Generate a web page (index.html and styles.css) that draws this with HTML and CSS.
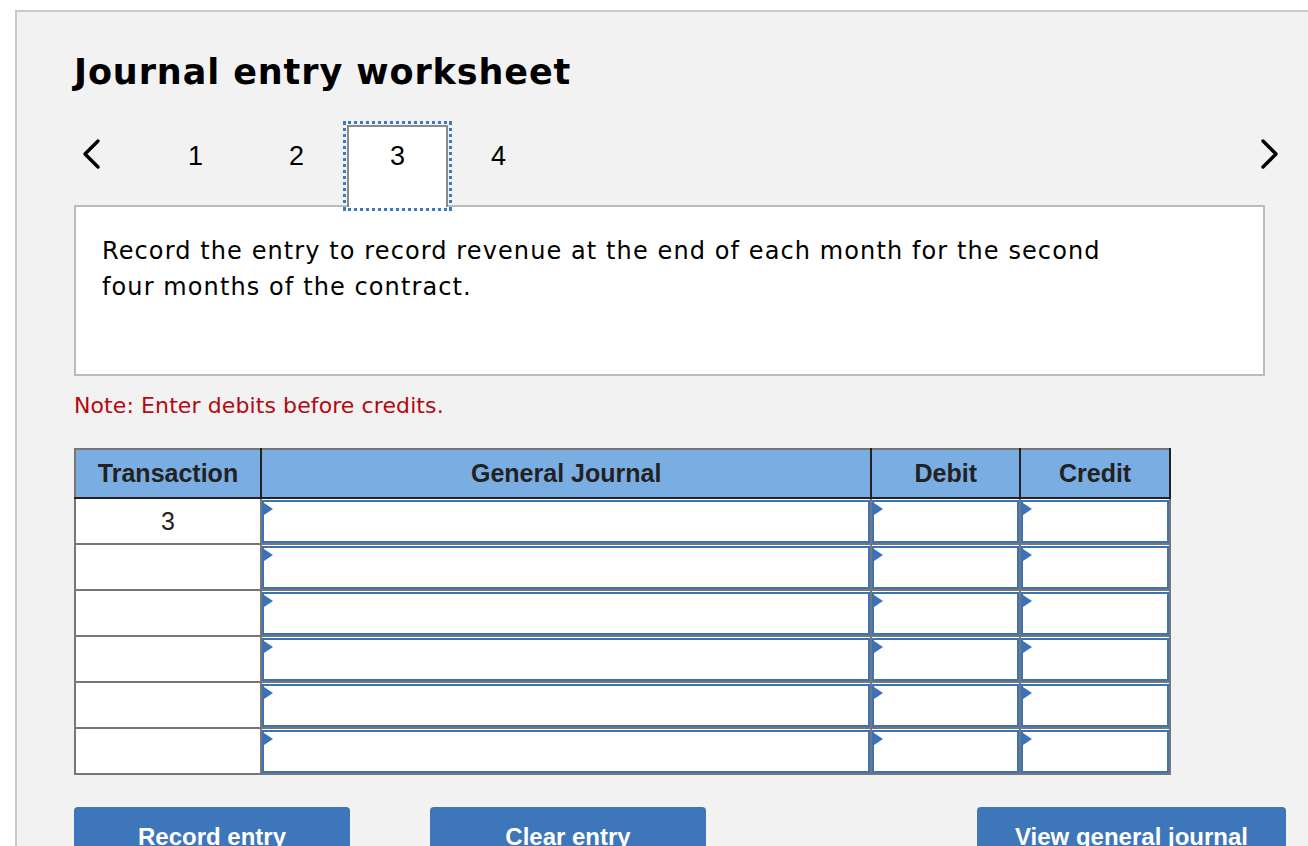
FILE: index.html
```html
<!DOCTYPE html>
<html lang="en">
<head>
<meta charset="utf-8">
<title>Journal entry worksheet</title>
<link rel="stylesheet" href="styles.css">
</head>
<body>
<div class="panel">
  <h1 class="title">Journal entry worksheet</h1>

  <div class="nav">
    <button class="chev chev-left" aria-label="Previous">
      <svg width="20" height="32" viewBox="0 0 20 32"><polyline points="17,3 4,16 17,29" fill="none" stroke="#000" stroke-width="3.4" stroke-linecap="round" stroke-linejoin="round"/></svg>
    </button>
    <div class="tabs">
      <span class="tab">1</span>
      <span class="tab">2</span>
      <span class="tab active">3</span>
      <span class="tab">4</span>
    </div>
    <button class="chev chev-right" aria-label="Next">
      <svg width="20" height="32" viewBox="0 0 20 32"><polyline points="3,3 16,16 3,29" fill="none" stroke="#000" stroke-width="3.4" stroke-linecap="round" stroke-linejoin="round"/></svg>
    </button>
  </div>

  <div class="question">
    <p>Record the entry to record revenue at the end of each month for the second four months of the contract.</p>
  </div>

  <p class="note">Note: Enter debits before credits.</p>

  <table class="journal">
    <thead>
      <tr>
        <th class="c-tr">Transaction</th>
        <th class="c-gj">General Journal</th>
        <th class="c-dr">Debit</th>
        <th class="c-cr">Credit</th>
      </tr>
    </thead>
    <tbody>
      <tr>
        <td class="tr">3</td>
        <td class="in"><div class="field"><span class="flag"></span></div></td>
        <td class="in"><div class="field"><span class="flag"></span></div></td>
        <td class="in"><div class="field"><span class="flag"></span></div></td>
      </tr>
      <tr>
        <td class="tr"></td>
        <td class="in"><div class="field"><span class="flag"></span></div></td>
        <td class="in"><div class="field"><span class="flag"></span></div></td>
        <td class="in"><div class="field"><span class="flag"></span></div></td>
      </tr>
      <tr>
        <td class="tr"></td>
        <td class="in"><div class="field"><span class="flag"></span></div></td>
        <td class="in"><div class="field"><span class="flag"></span></div></td>
        <td class="in"><div class="field"><span class="flag"></span></div></td>
      </tr>
      <tr>
        <td class="tr"></td>
        <td class="in"><div class="field"><span class="flag"></span></div></td>
        <td class="in"><div class="field"><span class="flag"></span></div></td>
        <td class="in"><div class="field"><span class="flag"></span></div></td>
      </tr>
      <tr>
        <td class="tr"></td>
        <td class="in"><div class="field"><span class="flag"></span></div></td>
        <td class="in"><div class="field"><span class="flag"></span></div></td>
        <td class="in"><div class="field"><span class="flag"></span></div></td>
      </tr>
      <tr>
        <td class="tr"></td>
        <td class="in"><div class="field"><span class="flag"></span></div></td>
        <td class="in"><div class="field"><span class="flag"></span></div></td>
        <td class="in"><div class="field"><span class="flag"></span></div></td>
      </tr>
    </tbody>
  </table>

  <div class="actions">
    <button class="btn btn-record">Record entry</button>
    <button class="btn btn-clear">Clear entry</button>
    <button class="btn btn-view">View general journal</button>
  </div>
</div>
</body>
</html>
```

FILE: styles.css
```css
html, body {
  margin: 0;
  padding: 0;
  background: #ffffff;
  overflow: hidden;
}

.panel {
  margin: 10px 0 0 15px;
  border-top: 2px solid #c8c8c8;
  border-left: 2px solid #c8c8c8;
  background: #f2f2f2;
  padding: 0 43px 40px 57px;
  min-height: 900px;
}

.title {
  margin: 0;
  padding-top: 40px;
  font-family: "DejaVu Sans", Verdana, sans-serif;
  font-weight: bold;
  font-size: 35px;
  letter-spacing: 0.9px;
  line-height: 40px;
  color: #000;
}

.nav {
  display: flex;
  align-items: flex-start;
  margin-top: 33px;
  margin-right: -15px;
  margin-bottom: -2px;
  position: relative;
  z-index: 2;
}

.chev {
  border: 0;
  background: transparent;
  padding: 0;
  margin: 13px 0 0 7px;
  width: 20px;
  height: 32px;
  display: block;
}

.chev-left {
  margin-right: 44px;
}

.chev-right {
  margin-left: auto;
  margin-right: 0;
}

.tabs {
  display: flex;
}

.tab {
  box-sizing: border-box;
  width: 101px;
  height: 82px;
  padding-top: 14px;
  text-align: center;
  font-family: "Liberation Sans", Arial, sans-serif;
  font-size: 27px;
  line-height: 30px;
  color: #000;
  border: 2px solid transparent;
  border-bottom: 0;
}

.tab.active {
  background: #ffffff;
  border-color: #8a8a8a;
  outline: 3px dotted #3c78c3;
  outline-offset: 1px;
}

.question {
  box-sizing: border-box;
  height: 171px;
  border: 2px solid #bbbbbb;
  background: #ffffff;
  padding: 26px 26px;
}

.question p {
  margin: 0;
  max-width: 1012px;
  font-family: "DejaVu Sans", Verdana, sans-serif;
  font-size: 24px;
  letter-spacing: 1.1px;
  line-height: 36px;
  color: #000;
}

.note {
  margin: 17px 0 0;
  font-family: "DejaVu Sans", Verdana, sans-serif;
  font-size: 22px;
  letter-spacing: 0.1px;
  line-height: 26px;
  color: #b5070f;
}

.journal {
  margin-top: 29px;
  border-collapse: collapse;
  width: 1097px;
  border: 2px solid #777777;
  background: #ffffff;
}

.journal th {
  box-sizing: border-box;
  height: 49px;
  padding: 0;
  background: #7aaee3;
  border: 2px solid #222222;
  border-top-color: #777777;
  font-family: "Liberation Sans", Arial, sans-serif;
  font-weight: bold;
  font-size: 25px;
  color: #222222;
  text-align: center;
}

.journal th.c-tr {
  border-left-color: #777777;
}

.c-tr { width: 185px; }
.c-gj { width: 607px; }
.c-dr { width: 148px; }
.c-cr { width: 149px; }

.journal td {
  height: 44px;
  padding: 0;
  border: 2px solid #777777;
  vertical-align: top;
}

.journal td.tr {
  text-align: center;
  vertical-align: middle;
  font-family: "Liberation Sans", Arial, sans-serif;
  font-size: 25px;
  color: #222222;
}

.field {
  position: relative;
  box-sizing: border-box;
  height: 43px;
  margin-top: 1px;
  border: 2px solid #3b73b9;
  background: #ffffff;
}

.flag {
  position: absolute;
  left: 0;
  top: 1px;
  width: 0;
  height: 0;
  border-left: 9px solid #3b73b9;
  border-top: 6px solid transparent;
  border-bottom: 6px solid transparent;
}

.actions {
  display: flex;
  margin-top: 32px;
  margin-right: -21px;
}

.btn {
  height: 60px;
  border: 0;
  border-radius: 4px;
  background: #3d76b9;
  color: #ffffff;
  font-family: "Liberation Sans", Arial, sans-serif;
  font-weight: bold;
  font-size: 24px;
  padding: 0;
}

.btn-record { width: 276px; }
.btn-clear { width: 276px; margin-left: 80px; }
.btn-view { width: 309px; margin-left: auto; }
```
